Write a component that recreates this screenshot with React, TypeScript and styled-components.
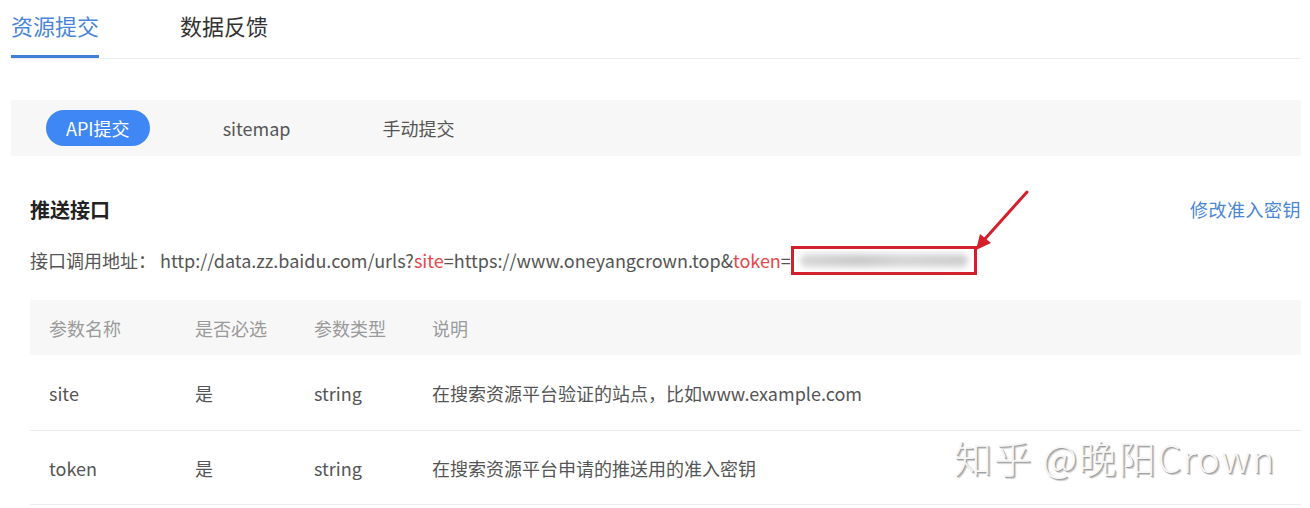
import styled, { createGlobalStyle } from "styled-components";

const GlobalStyle = createGlobalStyle`
  body {
    margin: 0;
    background: #ffffff;
    font-family: "Noto Sans CJK SC", "Noto Sans", sans-serif;
    color: #555555;
  }
`;

const Page = styled.div`
  position: relative;
  width: 1290px;
  height: 508px;
  padding-left: 11px;
  overflow: hidden;
`;

const TopTabs = styled.nav`
  display: flex;
  gap: 81px;
  height: 58px;
  border-bottom: 1px solid #ececec;
`;

const TopTab = styled.div<{ $active?: boolean }>`
  display: flex;
  align-items: center;
  box-sizing: border-box;
  height: 58px;
  padding-bottom: 6px;
  font-size: 22px;
  line-height: 1;
  color: ${(p) => (p.$active ? "#4a84d6" : "#333333")};
  border-bottom: 3px solid ${(p) => (p.$active ? "#3f7fd8" : "transparent")};
`;

const SubBar = styled.div`
  display: flex;
  align-items: center;
  gap: 54px;
  height: 56px;
  margin-top: 41px;
  padding-left: 35px;
  background: #f7f7f7;
`;

const SubTab = styled.div<{ $active?: boolean }>`
  display: flex;
  align-items: center;
  height: 36px;
  padding: 0 ${(p) => (p.$active ? "20px" : "19px")};
  border-radius: 18px;
  font-size: 18px;
  color: ${(p) => (p.$active ? "#ffffff" : "#555555")};
  background: ${(p) => (p.$active ? "#3f87f4" : "transparent")};
`;

const Content = styled.section`
  padding-left: 19px;
`;

const Header = styled.div`
  display: flex;
  justify-content: space-between;
  align-items: center;
  height: 34px;
  margin-top: 36px;
`;

const Title = styled.h3`
  margin: 0;
  font-size: 20px;
  font-weight: 700;
  color: #222222;
`;

const EditLink = styled.a`
  font-size: 18px;
  letter-spacing: 0.5px;
  color: #4a86d6;
  text-decoration: none;
  cursor: pointer;
`;

const UrlLine = styled.div`
  display: flex;
  align-items: center;
  height: 30px;
  margin-top: 19px;
  font-size: 18px;
  color: #555555;
  white-space: nowrap;
`;

const UrlLabel = styled.span`
  margin-right: 4px;
`;

const Param = styled.span`
  color: #e2494d;
`;

const TokenBox = styled.span`
  position: relative;
  display: inline-block;
  width: 186px;
  height: 29px;
  box-sizing: border-box;
  border: 3px solid #d3202c;
`;

const Blur = styled.span`
  display: block;
  margin: 5px 6px;
  height: 13px;
  border-radius: 6px;
  background: linear-gradient(90deg, #d8d8d8, #cacaca 35%, #d6d6d6 60%, #cecece);
  filter: blur(3px);
`;

const Arrow = styled.svg`
  position: absolute;
  left: 100%;
  top: -59px;
  width: 56px;
  height: 62px;
  overflow: visible;
`;

const Table = styled.div`
  margin-top: 25px;
`;

const Row = styled.div<{ $head?: boolean; $tall?: boolean }>`
  display: grid;
  grid-template-columns: 146px 119px 118px 1fr;
  align-items: center;
  height: ${(p) => (p.$head ? "55px" : p.$tall ? "75px" : "73px")};
  padding-left: 19px;
  font-size: 18px;
  color: ${(p) => (p.$head ? "#9a9a9a" : "#555555")};
  background: ${(p) => (p.$head ? "#f7f7f7" : "transparent")};
  border-bottom: ${(p) => (p.$head ? "none" : "1px solid #ececec")};
`;

const Watermark = styled.div`
  position: absolute;
  left: 954px;
  top: 429px;
  font-family: "Noto Sans CJK SC", "Noto Sans", sans-serif;
  font-size: 38px;
  font-weight: 300;
  letter-spacing: 1.4px;
  color: #f6f6f6;
  text-shadow: 1px 1px 0 #a0a0a0, 2px 2px 1px #c8c8c8;
  pointer-events: none;
`;

const rows = [
  { name: "site", required: "是", type: "string", desc: "在搜索资源平台验证的站点，比如www.example.com" },
  { name: "token", required: "是", type: "string", desc: "在搜索资源平台申请的推送用的准入密钥" },
];

export default function App() {
  return (
    <>
      <GlobalStyle />
      <Page>
        <TopTabs>
          <TopTab $active>资源提交</TopTab>
          <TopTab>数据反馈</TopTab>
        </TopTabs>

        <SubBar>
          <SubTab $active>API提交</SubTab>
          <SubTab>sitemap</SubTab>
          <SubTab>手动提交</SubTab>
        </SubBar>

        <Content>
          <Header>
            <Title>推送接口</Title>
            <EditLink>修改准入密钥</EditLink>
          </Header>

          <UrlLine>
            <UrlLabel>接口调用地址：</UrlLabel>
            http://data.zz.baidu.com/urls?<Param>site</Param>
            =https://www.oneyangcrown.top&amp;<Param>token</Param>=
            <TokenBox>
              <Blur />
              <Arrow viewBox="0 0 56 62">
                <line x1="53" y1="2" x2="10" y2="50" stroke="#d3202c" strokeWidth="3" strokeLinecap="round" />
                <polygon points="2,60 6,44 17,53" fill="#d3202c" />
              </Arrow>
            </TokenBox>
          </UrlLine>

          <Table>
            <Row $head>
              <span>参数名称</span>
              <span>是否必选</span>
              <span>参数类型</span>
              <span>说明</span>
            </Row>
            {rows.map((r, i) => (
              <Row key={r.name} $tall={i === 0}>
                <span>{r.name}</span>
                <span>{r.required}</span>
                <span>{r.type}</span>
                <span>{r.desc}</span>
              </Row>
            ))}
          </Table>
        </Content>

        <Watermark>知乎 @晚阳Crown</Watermark>
      </Page>
    </>
  );
}
